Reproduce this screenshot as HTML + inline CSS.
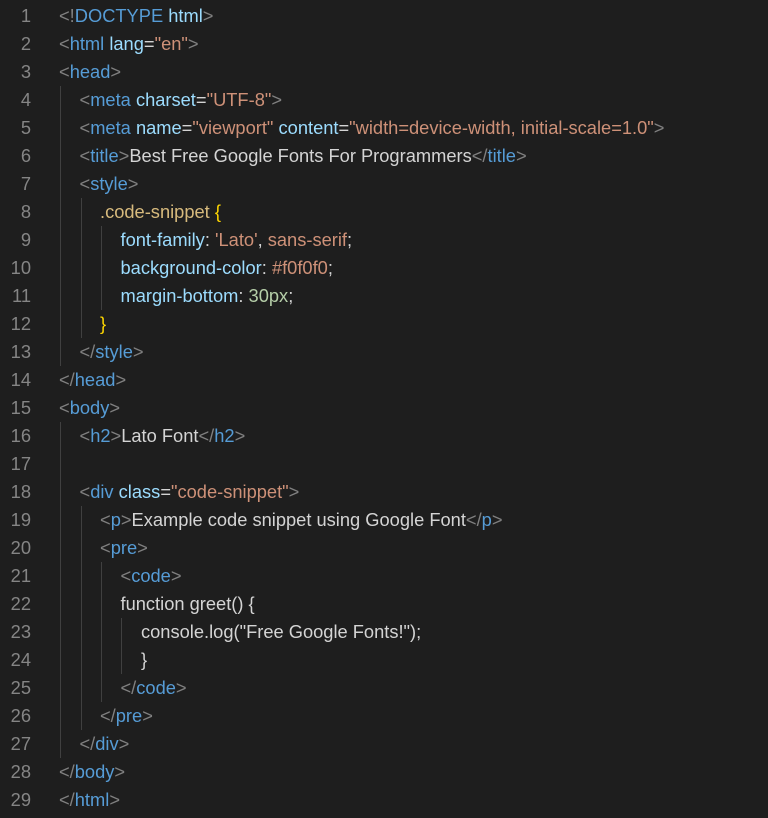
<!DOCTYPE html>
<html><head><style>
body{margin:0;background:#1e1e1e;width:768px;height:818px;overflow:hidden;font-family:"Liberation Sans",Arial,sans-serif;font-size:18.3px;}
.l{position:absolute;left:0;height:28px;line-height:28px;white-space:pre;color:#d4d4d4;}
.n{position:absolute;left:0;width:31px;text-align:right;color:#858585;}
.c{position:absolute;left:59px;}
.g{position:absolute;width:1px;background:#404040;}
.b{color:#808080}.t{color:#569cd6}.a{color:#9cdcfe}.s{color:#ce9178}.y{color:#d7ba7d}.br{color:#ffd700}.nm{color:#b5cea8}
</style></head><body>
<div class="g" style="left:60px;top:86px;height:280px"></div>
<div class="g" style="left:81px;top:198px;height:140px"></div>
<div class="g" style="left:101px;top:226px;height:84px"></div>
<div class="g" style="left:60px;top:422px;height:336px"></div>
<div class="g" style="left:81px;top:506px;height:224px"></div>
<div class="g" style="left:101px;top:562px;height:140px"></div>
<div class="g" style="left:121px;top:618px;height:56px"></div>
<div id="w"></div>
<script>
const L=[
[0,'<span class=b>&lt;!</span><span class=t>DOCTYPE</span> <span class=a>html</span><span class=b>&gt;</span>'],
[0,'<span class=b>&lt;</span><span class=t>html</span> <span class=a>lang</span>=<span class=s>"en"</span><span class=b>&gt;</span>'],
[0,'<span class=b>&lt;</span><span class=t>head</span><span class=b>&gt;</span>'],
[1,'<span class=b>&lt;</span><span class=t>meta</span> <span class=a>charset</span>=<span class=s>"UTF-8"</span><span class=b>&gt;</span>'],
[1,'<span class=b>&lt;</span><span class=t>meta</span> <span class=a>name</span>=<span class=s>"viewport"</span> <span class=a>content</span>=<span class=s>"width=device-width, initial-scale=1.0"</span><span class=b>&gt;</span>'],
[1,'<span class=b>&lt;</span><span class=t>title</span><span class=b>&gt;</span>Best Free Google Fonts For Programmers<span class=b>&lt;/</span><span class=t>title</span><span class=b>&gt;</span>'],
[1,'<span class=b>&lt;</span><span class=t>style</span><span class=b>&gt;</span>'],
[2,'<span class=y>.code-snippet</span> <span class=br>{</span>'],
[3,'<span class=a>font-family</span>: <span class=s>\'Lato\'</span>, <span class=s>sans-serif</span>;'],
[3,'<span class=a>background-color</span>: <span class=s>#f0f0f0</span>;'],
[3,'<span class=a>margin-bottom</span>: <span class=nm>30px</span>;'],
[2,'<span class=br>}</span>'],
[1,'<span class=b>&lt;/</span><span class=t>style</span><span class=b>&gt;</span>'],
[0,'<span class=b>&lt;/</span><span class=t>head</span><span class=b>&gt;</span>'],
[0,'<span class=b>&lt;</span><span class=t>body</span><span class=b>&gt;</span>'],
[1,'<span class=b>&lt;</span><span class=t>h2</span><span class=b>&gt;</span>Lato Font<span class=b>&lt;/</span><span class=t>h2</span><span class=b>&gt;</span>'],
[1,''],
[1,'<span class=b>&lt;</span><span class=t>div</span> <span class=a>class</span>=<span class=s>"code-snippet"</span><span class=b>&gt;</span>'],
[2,'<span class=b>&lt;</span><span class=t>p</span><span class=b>&gt;</span>Example code snippet using Google Font<span class=b>&lt;/</span><span class=t>p</span><span class=b>&gt;</span>'],
[2,'<span class=b>&lt;</span><span class=t>pre</span><span class=b>&gt;</span>'],
[3,'<span class=b>&lt;</span><span class=t>code</span><span class=b>&gt;</span>'],
[3,'function greet() {'],
[4,'console.log("Free Google Fonts!");'],
[4,'}'],
[3,'<span class=b>&lt;/</span><span class=t>code</span><span class=b>&gt;</span>'],
[2,'<span class=b>&lt;/</span><span class=t>pre</span><span class=b>&gt;</span>'],
[1,'<span class=b>&lt;/</span><span class=t>div</span><span class=b>&gt;</span>'],
[0,'<span class=b>&lt;/</span><span class=t>body</span><span class=b>&gt;</span>'],
[0,'<span class=b>&lt;/</span><span class=t>html</span><span class=b>&gt;</span>']];
let h='';L.forEach((x,i)=>{h+='<div class="l" style="top:'+(2+i*28)+'px"><span class="n">'+(i+1)+'</span><span class="c" style="left:'+(59+x[0]*20.5)+'px">'+x[1]+'</span></div>';});
document.getElementById('w').innerHTML=h;
</script>
</body></html>
